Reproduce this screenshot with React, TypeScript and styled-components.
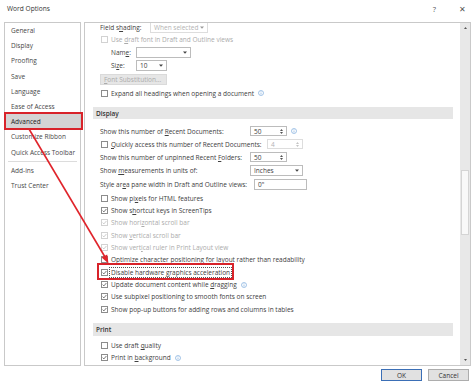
import React from 'react';
import styled, { createGlobalStyle, css } from 'styled-components';

const GlobalStyle = createGlobalStyle`
  html, body {
    margin: 0;
    padding: 0;
    background: #fff;
  }
  body {
    font-family: 'Open Sans', 'Noto Sans', sans-serif;
    font-size: 6.5px;
    color: #404040;
  }
`;

const Dialog = styled.div`
  position: relative;
  width: 474px;
  height: 386px;
  display: flex;
  flex-direction: column;
  background: #fff;
  overflow: hidden;
`;

const TitleBar = styled.div`
  height: 22px;
  box-sizing: border-box;
  display: flex;
  align-items: flex-start;
  justify-content: space-between;
  padding: 4px 8px 0 7px;
`;

const Title = styled.div`
  font-size: 6.6px;
  line-height: 10px;
  color: #333;
`;

const TitleButtons = styled.div`
  display: flex;
  gap: 23px;
  font-size: 7.5px;
  line-height: 10px;
  color: #555;
`;

const Main = styled.div`
  display: flex;
  height: 344px;
  padding: 0 3px 0 4px;
  gap: 3px;
`;

const Nav = styled.nav`
  width: 77px;
  flex: none;
  box-sizing: border-box;
  border: 1px solid #c9c9c9;
  display: flex;
  flex-direction: column;
`;

const NavItem = styled.div<{ $active?: boolean }>`
  position: relative;
  height: 15.2px;
  display: flex;
  align-items: center;
  padding-left: 6px;
  font-size: 6.5px;
  color: #474747;
  ${p =>
    p.$active &&
    css`
      margin-left: 1px;
      padding-left: 5px;
      background: #d4d4d4;
      color: #222;
      &::after {
        content: '';
        position: absolute;
        left: -2px;
        right: -3px;
        top: -2px;
        bottom: -1px;
        border: 2px solid #d8232a;
      }
    `}
`;

const NavDivider = styled.div`
  height: 1px;
  background: #dcdcdc;
  margin: 1px 3px 1px 3px;
`;

const ContentPanel = styled.section`
  flex: 1;
  min-width: 0;
  border: 1px solid #c9c9c9;
  display: flex;
`;

const ScrollArea = styled.div`
  flex: 1;
  overflow: hidden;
  padding-left: 15px;
`;

const ScrollInner = styled.div`
  margin-top: -2.5px;
`;

const Scrollbar = styled.div`
  width: 10px;
  flex: none;
  background: #e8e8e8;
  display: flex;
  flex-direction: column;
`;

const ScrollArrow = styled.div`
  height: 10px;
  display: flex;
  align-items: center;
  justify-content: center;
`;

const ScrollTrack = styled.div`
  flex: 1;
`;

const Thumb = styled.div`
  margin: 137px 1px 0;
  height: 65px;
  box-sizing: border-box;
  background: #f8f8f8;
  border: 1px solid #d4d4d4;
`;

const Row = styled.div<{ $h?: number; $indent?: number; $mt?: number; $marked?: boolean }>`
  position: relative;
  display: flex;
  align-items: center;
  height: ${p => p.$h ?? 12.33}px;
  margin-top: ${p => p.$mt ?? 0}px;
  padding-left: ${p => p.$indent ?? 0}px;
  white-space: nowrap;
  ${p =>
    p.$marked &&
    css`
      &::after {
        content: '';
        position: absolute;
        left: -3px;
        width: 137px;
        top: -3px;
        bottom: -2px;
        box-sizing: border-box;
        border: 2px solid #d8232a;
      }
    `}
`;

const Label = styled.span<{ $w?: number; $disabled?: boolean; $focus?: boolean }>`
  flex: none;
  ${p => p.$w && `width: ${p.$w}px;`}
  color: ${p => (p.$disabled ? '#ababab' : '#404040')};
  ${p =>
    p.$focus &&
    css`
      outline: 1px dotted #555;
      outline-offset: 0;
      padding: 0 1px;
      margin-left: -1px;
    `}
`;

const Key = styled.span`
  text-decoration: underline;
  text-underline-offset: 1px;
`;

const SectionHeader = styled.div<{ $mt: number; $h?: number }>`
  margin: ${p => p.$mt}px 7px 0 -7px;
  height: ${p => p.$h ?? 12}px;
  background: #e6e6e6;
  display: flex;
  align-items: center;
  padding-left: 3px;
  font-weight: 600;
  color: #333;
`;

const Box = styled.span<{ $disabled?: boolean }>`
  flex: none;
  box-sizing: border-box;
  width: 7px;
  height: 7px;
  margin: 0 3px 0 1px;
  border: 1px solid ${p => (p.$disabled ? '#d2d2d2' : '#8c8c8c')};
  background: #fff;
  display: flex;
  align-items: center;
  justify-content: center;
  svg {
    display: block;
  }
`;

const Field = styled.div<{ $w: number; $disabled?: boolean; $h?: number }>`
  flex: none;
  box-sizing: border-box;
  width: ${p => p.$w}px;
  height: ${p => p.$h ?? 11}px;
  border: 1px solid ${p => (p.$disabled ? '#dddddd' : '#bcbcbc')};
  background: #fff;
  display: flex;
  align-items: center;
  justify-content: space-between;
  padding: 0 3px 0 3px;
  color: ${p => (p.$disabled ? '#b3b3b3' : '#404040')};
`;

const SpinArrows = styled.span`
  display: flex;
  flex-direction: column;
  gap: 1px;
`;

const GrayButton = styled.div<{ $disabled?: boolean }>`
  box-sizing: border-box;
  width: 67px;
  height: 11px;
  background: #e6e6e6;
  border: 1px solid #dadada;
  display: flex;
  align-items: center;
  padding-left: 3px;
  color: ${p => (p.$disabled ? '#ababab' : '#333')};
`;

const InfoWrap = styled.span`
  margin-left: 4px;
  display: flex;
`;

const Footer = styled.div`
  flex: 1;
  display: flex;
  justify-content: flex-end;
  align-items: flex-start;
  gap: 6px;
  padding: 3px 5px 0 0;
`;

const DialogButton = styled.button<{ $primary?: boolean }>`
  width: 41px;
  height: 12px;
  box-sizing: border-box;
  padding: 0;
  font-family: inherit;
  font-size: 6.5px;
  color: #333;
  background: #e1e1e1;
  border: ${p => (p.$primary ? '1.5px solid #3b6fb6' : '1px solid #adadad')};
`;

const ArrowLayer = styled.svg`
  position: absolute;
  inset: 0;
  pointer-events: none;
`;

const Caret = ({ disabled }: { disabled?: boolean }) => (
  <svg width="4" height="3" viewBox="0 0 4 3">
    <path d="M0 0.5 H4 L2 2.8 Z" fill={disabled ? '#9a9a9a' : '#444'} />
  </svg>
);

const Tri = ({ up, color = '#555' }: { up?: boolean; color?: string }) => (
  <svg width="3" height="2" viewBox="0 0 3 2" style={{ display: 'block' }}>
    <path d={up ? 'M0 2 H3 L1.5 0 Z' : 'M0 0 H3 L1.5 2 Z'} fill={color} />
  </svg>
);

const Info = () => (
  <InfoWrap>
    <svg width="6" height="6" viewBox="0 0 6 6">
      <circle cx="3" cy="3" r="2.5" fill="none" stroke="#6a9fd8" strokeWidth="0.6" />
      <rect x="2.7" y="2.5" width="0.6" height="2" fill="#6a9fd8" />
      <rect x="2.7" y="1.4" width="0.6" height="0.6" fill="#6a9fd8" />
    </svg>
  </InfoWrap>
);

const Check = ({ checked, disabled }: { checked?: boolean; disabled?: boolean }) => (
  <Box $disabled={disabled}>
    {checked && (
      <svg width="5" height="5" viewBox="0 0 5 5">
        <path
          d="M0.6 2.6 L1.9 3.9 L4.4 1"
          fill="none"
          stroke={disabled ? '#c0c0c0' : '#555'}
          strokeWidth="0.8"
        />
      </svg>
    )}
  </Box>
);

const Select = ({ w, value, disabled }: { w: number; value?: string; disabled?: boolean }) => (
  <Field $w={w} $disabled={disabled}>
    <span>{value}</span>
    <Caret disabled={disabled} />
  </Field>
);

const Spin = ({ w, value, disabled }: { w: number; value: string; disabled?: boolean }) => (
  <Field $w={w} $h={10} $disabled={disabled}>
    <span>{value}</span>
    <SpinArrows>
      <Tri up color={disabled ? '#c4c4c4' : '#555'} />
      <Tri color={disabled ? '#c4c4c4' : '#555'} />
    </SpinArrows>
  </Field>
);

const CheckRow = ({
  children,
  checked,
  disabled,
  info,
  h,
  mt,
  marked
}: {
  children: React.ReactNode;
  checked?: boolean;
  disabled?: boolean;
  info?: boolean;
  h?: number;
  mt?: number;
  marked?: boolean;
}) => (
  <Row $h={h} $mt={mt} $marked={marked}>
    <Check checked={checked} disabled={disabled} />
    <Label $disabled={disabled} $focus={marked}>
      {children}
    </Label>
    {info && <Info />}
  </Row>
);

const navItems = [
  'General',
  'Display',
  'Proofing',
  'Save',
  'Language',
  'Ease of Access',
  'Advanced',
  'Customize Ribbon',
  'Quick Access Toolbar'
];

export default function App() {
  return (
    <>
      <GlobalStyle />
      <Dialog>
        <TitleBar>
          <Title>Word Options</Title>
          <TitleButtons>
            <span>?</span>
            <span>✕</span>
          </TitleButtons>
        </TitleBar>

        <Main>
          <Nav>
            {navItems.map(item => (
              <NavItem key={item} $active={item === 'Advanced'}>
                {item}
              </NavItem>
            ))}
            <NavDivider />
            <NavItem>Add-ins</NavItem>
            <NavItem>Trust Center</NavItem>
          </Nav>

          <ContentPanel>
            <ScrollArea>
              <ScrollInner>
                <Row $h={13}>
                  <Label $w={50}>
                    Field s<Key>h</Key>ading:
                  </Label>
                  <Select w={58} value="When selected" disabled />
                </Row>
                <CheckRow h={12} disabled>
                  Use <Key>d</Key>raft font in Draft and Outline views
                </CheckRow>
                <Row $h={13} $indent={11}>
                  <Label $w={25}>
                    Nam<Key>e</Key>:
                  </Label>
                  <Select w={55} />
                </Row>
                <Row $h={14} $indent={11}>
                  <Label $w={25}>
                    Si<Key>z</Key>e:
                  </Label>
                  <Select w={31} value="10" />
                </Row>
                <Row $h={14}>
                  <GrayButton $disabled>
                    <Key>F</Key>ont Substitution...
                  </GrayButton>
                </Row>
                <CheckRow h={13} info>
                  Expand all headings when opening a document
                </CheckRow>

                <SectionHeader $mt={7.5}>Display</SectionHeader>
                <Row $h={13} $mt={5.5}>
                  <Label $w={150}>
                    Show this number of <Key>R</Key>ecent Documents:
                  </Label>
                  <Spin w={37} value="50" />
                  <Info />
                </Row>
                <Row $h={13}>
                  <Check />
                  <Label $w={156}>
                    <Key>Q</Key>uickly access this number of Recent Documents:
                  </Label>
                  <Spin w={36} value="4" disabled />
                </Row>
                <Row $h={13}>
                  <Label $w={150}>
                    Show this number of unpinned Recent <Key>F</Key>olders:
                  </Label>
                  <Spin w={37} value="50" />
                </Row>
                <Row $h={14}>
                  <Label $w={150}>
                    Show <Key>m</Key>easurements in units of:
                  </Label>
                  <Select w={53} value="Inches" />
                </Row>
                <Row $h={14}>
                  <Label $w={154}>
                    Style ar<Key>e</Key>a pane width in Draft and Outline views:
                  </Label>
                  <Field $w={53}>
                    <span>0"</span>
                  </Field>
                </Row>
                <CheckRow h={13}>
                  Show pi<Key>x</Key>els for HTML features
                </CheckRow>
                <CheckRow checked>
                  Show s<Key>h</Key>ortcut keys in ScreenTips
                </CheckRow>
                <CheckRow checked disabled>
                  Show hori<Key>z</Key>ontal scroll bar
                </CheckRow>
                <CheckRow checked disabled>
                  Show <Key>v</Key>ertical scroll bar
                </CheckRow>
                <CheckRow checked disabled>
                  Show vert<Key>i</Key>cal ruler in Print Layout view
                </CheckRow>
                <CheckRow>
                  Optimi<Key>z</Key>e character positioning for layout rather than readability
                </CheckRow>
                <CheckRow checked marked>
                  Disable hardware graphics acceleration
                </CheckRow>
                <CheckRow checked info>
                  Update document content while <Key>d</Key>ragging
                </CheckRow>
                <CheckRow checked>Use subpixel positioning to smooth fonts on screen</CheckRow>
                <CheckRow checked>Show pop-up buttons for adding rows and columns in tables</CheckRow>

                <SectionHeader $mt={7.5} $h={13}>
                  Print
                </SectionHeader>
                <CheckRow h={12} mt={4}>
                  Use draft <Key>q</Key>uality
                </CheckRow>
                <CheckRow h={12} checked info>
                  Print in <Key>b</Key>ackground
                </CheckRow>
              </ScrollInner>
            </ScrollArea>

            <Scrollbar>
              <ScrollArrow>
                <Tri up />
              </ScrollArrow>
              <ScrollTrack>
                <Thumb />
              </ScrollTrack>
              <ScrollArrow>
                <Tri />
              </ScrollArrow>
            </Scrollbar>
          </ContentPanel>
        </Main>

        <Footer>
          <DialogButton $primary>OK</DialogButton>
          <DialogButton>Cancel</DialogButton>
        </Footer>

        <ArrowLayer width="474" height="386" viewBox="0 0 474 386">
          <line x1="29" y1="129" x2="105" y2="257" stroke="#e0242b" strokeWidth="1.6" />
          <polygon points="108.5,263.5 101.6,257.6 107.2,254.4" fill="#e0242b" />
        </ArrowLayer>
      </Dialog>
    </>
  );
}
